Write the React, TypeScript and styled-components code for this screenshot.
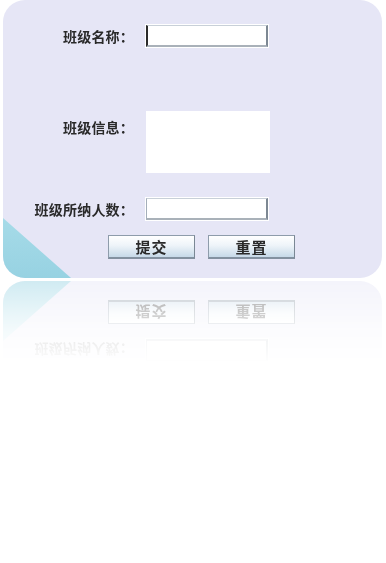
import React from 'react';
import styled, { createGlobalStyle, css } from 'styled-components';

const GlobalStyle = createGlobalStyle`
    html, body {
        margin: 0;
        padding: 0;
        background: #fff;
    }
    body {
        font-family: "Noto Sans CJK SC", "DejaVu Sans", sans-serif;
    }
`;

const Page = styled.main`
    width: 386px;
    height: 563px;
    padding: 0 4px 0 3px;
    box-sizing: border-box;
`;

const Card = styled.form`
    position: relative;
    overflow: hidden;
    width: 379px;
    height: 278px;
    box-sizing: border-box;
    padding: 25px 0 0 0;
    border-radius: 22px;
    background-color: #e6e6f6;
    -webkit-box-reflect: below 3px
        linear-gradient(
            to bottom,
            transparent 0%,
            transparent 70%,
            rgba(0, 0, 0, 0.12) 82%,
            rgba(0, 0, 0, 0.45) 100%
        );

    &::before {
        content: '';
        position: absolute;
        left: 0;
        bottom: 0;
        width: 68px;
        height: 60px;
        background: linear-gradient(to bottom, #a6dbe8, #97d2e2);
        clip-path: polygon(0 0, 100% 100%, 0 100%);
    }
`;

const Row = styled.div<{ $gap?: number; $top?: boolean }>`
    position: relative;
    display: flex;
    align-items: ${({ $top }) => ($top ? 'flex-start' : 'center')};
    gap: 12px;
    margin-top: ${({ $gap }) => $gap ?? 0}px;
`;

const Label = styled.label<{ $offset?: number }>`
    width: 131px;
    flex-shrink: 0;
    text-align: right;
    font-size: 14px;
    font-weight: 700;
    color: #2a2a2a;
    white-space: nowrap;
    letter-spacing: 0.2px;
    padding-top: ${({ $offset }) => $offset ?? 0}px;
`;

const TextInput = styled.input<{ $caret?: boolean }>`
    width: 122px;
    height: 22px;
    box-sizing: border-box;
    margin: 0;
    padding: 0 4px;
    background: #fff;
    border-top: 1px solid #c8d0d8;
    border-left: 1px solid #a4aeba;
    border-right: 2px solid #7d8893;
    border-bottom: 2px solid #a9b1b9;
    outline: 1px solid #fff;
    ${({ $caret }) =>
        $caret &&
        css`
            border-left: 2px solid #2b2b2b;
        `}
`;

const TextArea = styled.textarea`
    width: 124px;
    height: 62px;
    box-sizing: border-box;
    margin: 0;
    padding: 0;
    border: none;
    resize: none;
    background: #fff;
`;

const Actions = styled.div`
    position: relative;
    display: flex;
    gap: 13px;
    margin-top: 15px;
    padding-left: 105px;
`;

const Button = styled.button`
    width: 87px;
    height: 24px;
    box-sizing: border-box;
    padding: 0;
    font-family: "Noto Sans CJK SC", sans-serif;
    font-size: 15px;
    font-weight: 700;
    color: #2a2a2a;
    letter-spacing: 1px;
    background: linear-gradient(to bottom, #ffffff 0%, #eef4f9 45%, #c6d9e8 100%);
    border: 1px solid #8e9cab;
    border-right-color: #7a8794;
    border-bottom: 2px solid #8391a0;
    cursor: pointer;
`;

export default function App() {
    return (
        <Page>
            <GlobalStyle />
            <Card onSubmit={(e) => e.preventDefault()}>
                <Row>
                    <Label>班级名称：</Label>
                    <TextInput $caret />
                </Row>
                <Row $gap={64} $top>
                    <Label $offset={6}>班级信息：</Label>
                    <TextArea />
                </Row>
                <Row $gap={25}>
                    <Label>班级所纳人数：</Label>
                    <TextInput />
                </Row>
                <Actions>
                    <Button type="submit">提交</Button>
                    <Button type="reset">重置</Button>
                </Actions>
            </Card>
        </Page>
    );
}
